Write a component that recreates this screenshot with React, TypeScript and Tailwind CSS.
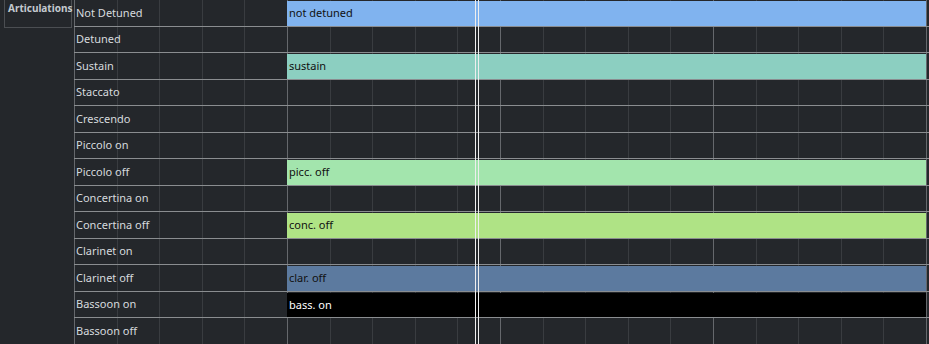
import React from 'react';

const rows = [
  { label: 'Not Detuned', event: { text: 'not detuned', bg: 'bg-[#80b3ef]', fg: 'text-[#111]' } },
  { label: 'Detuned' },
  { label: 'Sustain', event: { text: 'sustain', bg: 'bg-[#8ccfc1]', fg: 'text-[#111]' } },
  { label: 'Staccato' },
  { label: 'Crescendo' },
  { label: 'Piccolo on' },
  { label: 'Piccolo off', event: { text: 'picc. off', bg: 'bg-[#a3e5ad]', fg: 'text-[#111]' } },
  { label: 'Concertina on' },
  { label: 'Concertina off', event: { text: 'conc. off', bg: 'bg-[#afe385]', fg: 'text-[#111]' } },
  { label: 'Clarinet on' },
  { label: 'Clarinet off', event: { text: 'clar. off', bg: 'bg-[#5c7a9f]', fg: 'text-[#111]' } },
  { label: 'Bassoon on', event: { text: 'bass. on', bg: 'bg-[#000000]', fg: 'text-white' } },
  { label: 'Bassoon off' },
];

// 4 bars of 5 beats, 213px per bar
const BEAT = 213 / 5;
const beatLines = Array.from({ length: 21 }, (_, i) => i);

export default function App() {
  return (
    <div
      className="flex w-[929px] h-[344px] bg-[#24272b] overflow-hidden text-[11px] text-[#d6dade]"
      style={{ fontFamily: '"Noto Sans", "Open Sans", sans-serif' }}
    >
      {/* Track header */}
      <div className="w-[74px] shrink-0 pl-1 pr-[2px]">
        <div className="h-[29px] -mt-px border border-[#4b4e52] px-[3px] pt-[1px] text-[10px] font-bold text-[#c3c9cf] leading-[14px]">
          Articulations
        </div>
      </div>

      {/* Timeline */}
      <div className="relative flex-1">
        {/* grid lines */}
        <div className="absolute inset-0">
          {beatLines.map((i) => (
            <div
              key={i}
              className={`absolute top-0 bottom-0 w-px ${i % 5 === 0 ? 'bg-[#65686c]' : 'bg-[#393c40]'}`}
              style={{ left: Math.round(i * BEAT) }}
            />
          ))}
        </div>

        <div className="relative flex flex-col h-full">
          {rows.map((r) => (
            <div key={r.label} className="flex-1 flex border-b border-[#8a8d90] last:border-b-0">
              <div className="w-[213px] shrink-0 pl-[2px] flex items-center">{r.label}</div>
              {r.event && (
                <div className={`w-[639px] mt-px flex items-center pl-[2px] ${r.event.bg} ${r.event.fg}`}>
                  {r.event.text}
                </div>
              )}
            </div>
          ))}
        </div>

        {/* playhead */}
        <div className="absolute top-0 bottom-0 left-[401px] w-px bg-[#eeeeee]" />
        <div className="absolute top-0 bottom-0 left-[404px] w-px bg-[#eeeeee]" />
      </div>
    </div>
  );
}
